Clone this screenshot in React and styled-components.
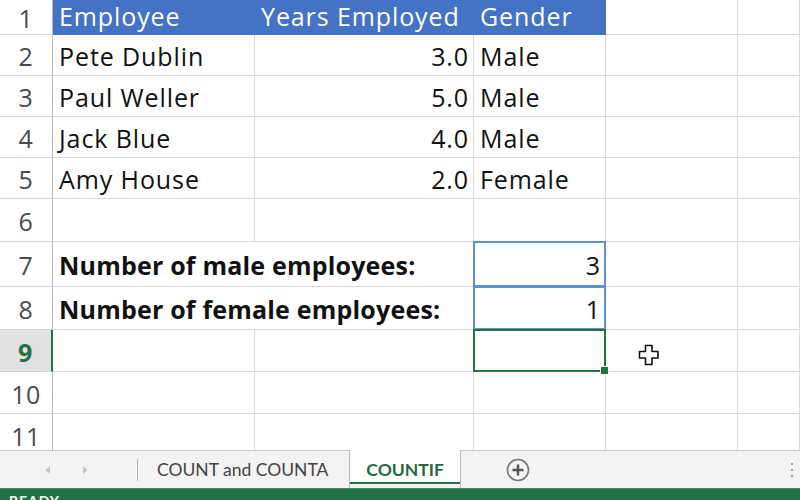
import styled, { createGlobalStyle, css } from 'styled-components';

const GlobalStyle = createGlobalStyle`
  * { box-sizing: border-box; }
  html, body { margin: 0; padding: 0; }
  body {
    width: 800px;
    height: 500px;
    overflow: hidden;
    background: #fff;
    font-family: Lato, "Open Sans", "Liberation Sans", sans-serif;
  }
`;

const Window = styled.div`
  display: flex;
  flex-direction: column;
  width: 800px;
  height: 500px;
  overflow: hidden;
`;

const Sheet = styled.div`
  position: relative;
  flex: 1;
  overflow: hidden;
  display: grid;
  grid-template-columns: 53px 202px 219px 132px 132px 1fr;
  grid-template-rows: 35px 41px 41px 41px 41px 43px 45px 43px 42px 42px 42px;
  align-content: start;
  font-family: "Open Sans", Lato, sans-serif;
`;

const RowHead = styled.div`
  display: flex;
  align-items: center;
  justify-content: center;
  padding-top: 2px;
  font-size: 25px;
  line-height: 30px;
  letter-spacing: 0.5px;
  color: ${(p) => (p.$active ? '#217346' : '#4a4a4a')};
  font-weight: ${(p) => (p.$active ? 700 : 400)};
  background: ${(p) => (p.$active ? '#e1e1e1' : '#fff')};
  border-right: ${(p) => (p.$active ? '2px solid #217346' : '1px solid #bcbcbc')};
  border-bottom: 1px solid #d6d6d6;
`;

const Cell = styled.div`
  position: relative;
  display: flex;
  align-items: center;
  justify-content: ${(p) => (p.$align === 'right' ? 'flex-end' : 'flex-start')};
  padding: ${(p) => (p.$head ? '1px 5px 3px 6px' : '2px 4px 0 6px')};
  grid-column: span ${(p) => p.$span || 1};
  background: ${(p) => (p.$head ? '#4472c4' : '#fff')};
  color: ${(p) => (p.$head ? '#fff' : '#111')};
  border-right: 1px solid ${(p) => (p.$head ? '#4472c4' : '#dadada')};
  border-bottom: 1px solid ${(p) => (p.$head ? '#4472c4' : '#dadada')};
  font-size: 25px;
  line-height: 30px;
  letter-spacing: ${(p) => (p.$bold ? '0.2px' : '0.9px')};
  font-weight: ${(p) => (p.$bold ? 700 : 400)};
  white-space: nowrap;

  ${(p) =>
    p.$mark === 'ref' &&
    css`
      z-index: 1;
      &::after {
        content: '';
        position: absolute;
        inset: -1px -1px -1px -1px;
        border: 2px solid #5b8fd6;
        pointer-events: none;
      }
    `}

  ${(p) =>
    p.$mark === 'active' &&
    css`
      z-index: 2;
      &::after {
        content: '';
        position: absolute;
        inset: -1px -1px -1px -1px;
        border: 2px solid #217346;
        pointer-events: none;
      }
      &::before {
        content: '';
        position: absolute;
        right: -4px;
        bottom: -4px;
        width: 7px;
        height: 7px;
        background: #217346;
        border: 1px solid #fff;
        z-index: 3;
      }
    `}
`;

const Cursor = styled.svg`
  position: absolute;
  left: 638px;
  top: 344px;
  width: 22px;
  height: 22px;
  z-index: 5;
`;

const TabBar = styled.div`
  flex-shrink: 0;
  height: 38px;
  display: flex;
  align-items: stretch;
  background: #f3f3f3;
  border-top: 1px solid #c6c6c6;
`;

const NavArrows = styled.div`
  width: 137px;
  display: flex;
  align-items: center;
  justify-content: center;
  gap: 31px;
  padding-right: 4px;
`;

const Separator = styled.div`
  width: 1px;
  height: 22px;
  align-self: center;
  background: #b5b5b5;
`;

const Tab = styled.div`
  display: flex;
  align-items: center;
  padding: ${(p) => (p.$active ? '0 16px 0 16px' : '0 21px 0 19px')};
  font-size: 17.5px;
  color: ${(p) => (p.$active ? '#1e6b3f' : '#444')};
  font-weight: ${(p) => (p.$active ? 700 : 400)};
  white-space: nowrap;

  ${(p) =>
    p.$active &&
    css`
      margin-top: -1px;
      background: #fff;
      border-left: 1px solid #b9b9b9;
      border-right: 1px solid #b9b9b9;
      box-shadow: inset 0 -4px 0 #f3f3f3, inset 0 -6px 0 #217346;
    `}
`;

const AddSheet = styled.svg`
  align-self: center;
  margin-left: 45px;
  width: 24px;
  height: 24px;
`;

const MoreDots = styled.div`
  margin-left: auto;
  margin-right: 7px;
  align-self: center;
  display: flex;
  flex-direction: column;
  gap: 4px;

  span {
    width: 2px;
    height: 2px;
    background: #9a9a9a;
  }
`;

const StatusBar = styled.div`
  flex-shrink: 0;
  height: 12px;
  overflow: hidden;
  background: #217346;
  border-top: 1px solid #3f8a5f;
  color: #fff;
  font-size: 14px;
  font-weight: 700;
  letter-spacing: 1px;
  padding: 5px 0 0 9px;
  line-height: 1;
`;

const rows = [
  {
    n: 1,
    cells: [
      { t: 'Employee', head: true },
      { t: 'Years Employed', head: true },
      { t: 'Gender', head: true },
      {},
      {},
    ],
  },
  { n: 2, cells: [{ t: 'Pete Dublin' }, { t: '3.0', align: 'right' }, { t: 'Male' }, {}, {}] },
  { n: 3, cells: [{ t: 'Paul Weller' }, { t: '5.0', align: 'right' }, { t: 'Male' }, {}, {}] },
  { n: 4, cells: [{ t: 'Jack Blue' }, { t: '4.0', align: 'right' }, { t: 'Male' }, {}, {}] },
  { n: 5, cells: [{ t: 'Amy House' }, { t: '2.0', align: 'right' }, { t: 'Female' }, {}, {}] },
  { n: 6, cells: [{}, {}, {}, {}, {}] },
  {
    n: 7,
    cells: [
      { t: 'Number of male employees:', bold: true, span: 2 },
      { t: '3', align: 'right', mark: 'ref' },
      {},
      {},
    ],
  },
  {
    n: 8,
    cells: [
      { t: 'Number of female employees:', bold: true, span: 2 },
      { t: '1', align: 'right', mark: 'ref' },
      {},
      {},
    ],
  },
  { n: 9, active: true, cells: [{}, {}, { mark: 'active' }, {}, {}] },
  { n: 10, cells: [{}, {}, {}, {}, {}] },
  { n: 11, cells: [{}, {}, {}, {}, {}] },
];

function Arrow({ dir }) {
  return (
    <svg width="7" height="10" viewBox="0 0 7 10">
      {dir === 'left' ? (
        <path d="M6 1 L1.5 5 L6 9 Z" fill="#c4c4c4" />
      ) : (
        <path d="M1 1 L5.5 5 L1 9 Z" fill="#c4c4c4" />
      )}
    </svg>
  );
}

export default function App() {
  return (
    <>
      <GlobalStyle />
      <Window>
        <Sheet>
          {rows.map((row) => (
            <>
              <RowHead key={`h${row.n}`} $active={row.active}>
                {row.n}
              </RowHead>
              {row.cells.map((c, i) => (
                <Cell
                  key={`${row.n}-${i}`}
                  $head={c.head}
                  $align={c.align}
                  $bold={c.bold}
                  $span={c.span}
                  $mark={c.mark}
                >
                  {c.t}
                </Cell>
              ))}
            </>
          ))}
          <Cursor viewBox="0 0 22 22">
            <path
              d="M7.5 1.5h6.5v6h6v6.5h-6v6.5H7.5v-6.5h-6V7.5h6z"
              fill="#fff"
              stroke="#111"
              strokeWidth="1.6"
              strokeLinejoin="round"
            />
          </Cursor>
        </Sheet>
        <TabBar>
          <NavArrows>
            <Arrow dir="left" />
            <Arrow dir="right" />
          </NavArrows>
          <Separator />
          <Tab>COUNT and COUNTA</Tab>
          <Tab $active>COUNTIF</Tab>
          <AddSheet viewBox="0 0 24 24">
            <circle cx="12" cy="12" r="10.5" fill="none" stroke="#777" strokeWidth="1.6" />
            <path d="M12 6.5v11M6.5 12h11" stroke="#555" strokeWidth="2.4" />
          </AddSheet>
          <MoreDots>
            <span />
            <span />
            <span />
          </MoreDots>
        </TabBar>
        <StatusBar>READY</StatusBar>
      </Window>
    </>
  );
}
